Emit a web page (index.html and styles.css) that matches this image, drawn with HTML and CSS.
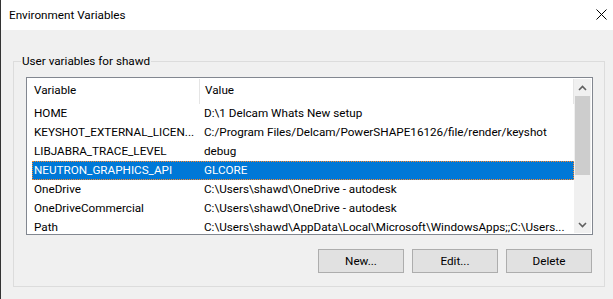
FILE: index.html
```html
<!DOCTYPE html>
<html lang="en">
<head>
  <meta charset="UTF-8">
  <title>Environment Variables</title>
  <link rel="stylesheet" href="styles.css">
</head>
<body>

  <div class="titlebar">
    <span class="title">Environment Variables</span>
    <svg class="close" width="11" height="11" viewBox="0 0 11 11">
      <path d="M0.5 0.5 L10.5 10.5 M10.5 0.5 L0.5 10.5" stroke="#000" stroke-width="1" fill="none"/>
    </svg>
  </div>

  <fieldset class="group">
    <legend>User variables for shawd</legend>

    <div class="list">
      <div class="rows">
        <div class="list-head">
          <div class="cell col-name">Variable</div>
          <div class="cell col-value">Value</div>
        </div>
        <div class="row">
          <div class="cell col-name">HOME</div>
          <div class="cell col-value">D:\1 Delcam Whats New setup</div>
        </div>
        <div class="row">
          <div class="cell col-name">KEYSHOT_EXTERNAL_LICEN...</div>
          <div class="cell col-value">C:/Program Files/Delcam/PowerSHAPE16126/file/render/keyshot</div>
        </div>
        <div class="row">
          <div class="cell col-name">LIBJABRA_TRACE_LEVEL</div>
          <div class="cell col-value">debug</div>
        </div>
        <div class="row selected">
          <div class="cell col-name">NEUTRON_GRAPHICS_API</div>
          <div class="cell col-value">GLCORE</div>
        </div>
        <div class="row">
          <div class="cell col-name">OneDrive</div>
          <div class="cell col-value">C:\Users\shawd\OneDrive - autodesk</div>
        </div>
        <div class="row">
          <div class="cell col-name">OneDriveCommercial</div>
          <div class="cell col-value">C:\Users\shawd\OneDrive - autodesk</div>
        </div>
        <div class="row">
          <div class="cell col-name">Path</div>
          <div class="cell col-value">C:\Users\shawd\AppData\Local\Microsoft\WindowsApps;;C:\Users...</div>
        </div>
      </div>

      <div class="scrollbar">
        <div class="arrow">
          <svg width="9" height="6" viewBox="0 0 9 6"><path d="M1 5 L4.5 1.5 L8 5" stroke="#606060" stroke-width="1.6" fill="none"/></svg>
        </div>
        <div class="thumb"></div>
        <div class="track"></div>
        <div class="arrow">
          <svg width="9" height="6" viewBox="0 0 9 6"><path d="M1 1 L4.5 4.5 L8 1" stroke="#606060" stroke-width="1.6" fill="none"/></svg>
        </div>
      </div>
    </div>

    <div class="actions">
      <button class="btn">New...</button>
      <button class="btn">Edit...</button>
      <button class="btn">Delete</button>
    </div>
  </fieldset>

  <fieldset class="group">
    <legend>System variables</legend>
  </fieldset>

</body>
</html>
```
FILE: styles.css
```css
:root {
  --face: #f0f0f0;
  --group-line: #dcdcdc;
  --list-border: #828790;
  --select: #0078d7;
  --btn-face: #e1e1e1;
  --btn-border: #adadad;
}

body {
  margin: 0;
  width: 612px;
  height: 299px;
  overflow: hidden;
  border-left: 1px solid #333;
  background-color: var(--face);
  font-family: Roboto, "Noto Sans", sans-serif;
  font-size: 11.7px;
  color: #000;
}

.titlebar {
  height: 30px;
  background: #fff;
  display: flex;
  align-items: center;
  justify-content: space-between;
  padding: 0 6px 0 8px;
}

.close {
  display: block;
  margin-top: -1px;
}

.group {
  margin: 23px 8px 0 12px;
  padding: 8px 11px 13px 7px;
  border: 1px solid var(--group-line);
  min-width: 0;
}
.group + .group {
  margin-top: 8px;
}
.group legend {
  padding: 0 1px;
  line-height: 16px;
}

/* list view */
.list {
  margin-left: 5px;
  height: 156px;
  border: 1px solid var(--list-border);
  background: #fff;
  display: flex;
}

.rows {
  flex: 1;
  min-width: 0;
  padding-left: 5px;
  overflow: hidden;
}

.list-head,
.row {
  display: flex;
  white-space: nowrap;
}

.list-head {
  height: 25px;
  padding-top: 1px;
}
.list-head .cell {
  border-right: 1px solid #e5e5e5;
  line-height: 23px;
}

.row {
  height: 19px;
  line-height: 19px;
}

.cell {
  overflow: hidden;
}
.col-name {
  width: 165px;
  flex: none;
  padding-left: 2px;
}
.col-value {
  flex: 1;
  padding-left: 5px;
}

.row.selected {
  background: var(--select);
  color: #fff;
  outline: 1px dotted #ff8728;
  outline-offset: -1px;
}

.scrollbar {
  width: 17px;
  flex: none;
  margin: 1px 1px 1px 0;
  background: var(--face);
  display: flex;
  flex-direction: column;
}
.scrollbar .arrow {
  height: 17px;
  display: flex;
  align-items: center;
  justify-content: center;
}
.scrollbar .thumb {
  height: 79px;
  margin: 0 1px;
  background: #cdcdcd;
}
.scrollbar .track {
  flex: 1;
}

/* buttons */
.actions {
  display: flex;
  justify-content: flex-end;
  gap: 8px;
  margin-top: 14px;
  padding-right: 1px;
}

.btn {
  width: 86px;
  height: 24px;
  background: var(--btn-face);
  border: 1px solid var(--btn-border);
  font: inherit;
  color: #000;
  padding: 0;
}
```
